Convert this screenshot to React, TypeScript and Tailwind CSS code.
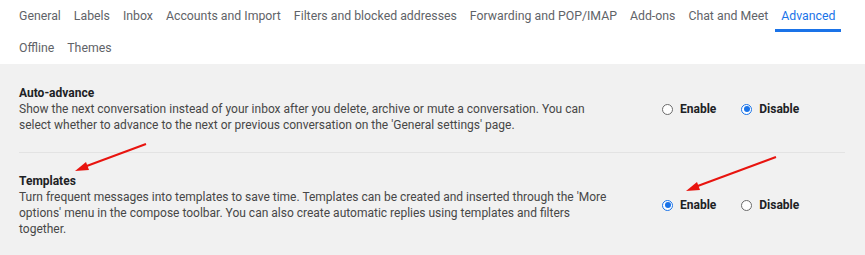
import React from "react";

const tabs = [
  "General",
  "Labels",
  "Inbox",
  "Accounts and Import",
  "Filters and blocked addresses",
  "Forwarding and POP/IMAP",
  "Add-ons",
  "Chat and Meet",
  "Advanced",
  "Offline",
  "Themes",
];

function Radio({ checked, label }: { checked: boolean; label: string }) {
  return (
    <label className="flex items-center gap-[7px]">
      <span
        className={
          checked
            ? "w-[11px] h-[11px] rounded-full border border-[#1a73e8] bg-white flex items-center justify-center"
            : "w-[11px] h-[11px] rounded-full border border-[#6b6b6b] bg-white"
        }
      >
        {checked && <span className="w-[6px] h-[6px] rounded-full bg-[#1a73e8]" />}
      </span>
      <span className="text-[12px] font-bold text-[#202124]">{label}</span>
    </label>
  );
}

function SettingRow({
  title,
  desc,
  enabled,
  border,
}: {
  title: string;
  desc: string;
  enabled: boolean;
  border?: boolean;
}) {
  return (
    <div className={border ? "flex items-center border-b border-[#e3e3e3] pt-[21px] pb-[19px]" : "flex items-center pt-[20px] pb-[18px]"}>
      <div className="w-[590px] shrink-0">
        <div className="text-[12px] leading-[16px] font-bold text-[#202124]">{title}</div>
        <div className="text-[12px] leading-[16px] text-[#474747]">{desc}</div>
      </div>
      <div className="ml-[53px] flex items-center gap-[25px]">
        <Radio checked={enabled} label="Enable" />
        <Radio checked={!enabled} label="Disable" />
      </div>
    </div>
  );
}

export default function App() {
  return (
    <div className="relative w-[865px] h-[255px] bg-white overflow-hidden" style={{ fontFamily: "Roboto, 'Open Sans', sans-serif" }}>
      {/* tab bar */}
      <div className="flex flex-wrap pl-[19px] gap-x-[13px] text-[12.3px] text-[#5f6368]">
        {tabs.map((t) => (
          <div
            key={t}
            className={
              t === "Advanced"
                ? "h-[32px] flex items-center px-[6px] -mx-[6px] border-b-[3px] border-[#1a73e8] pt-[3px] text-[#1a73e8]"
                : "h-[32px] flex items-center"
            }
          >
            {t}
          </div>
        ))}
      </div>

      {/* settings */}
      <div className="bg-[#f1f1f1] h-[191px] pl-[19px] pr-[20px]">
        <SettingRow
          title="Auto-advance"
          desc="Show the next conversation instead of your inbox after you delete, archive or mute a conversation. You can select whether to advance to the next or previous conversation on the 'General settings' page."
          enabled={false}
          border
        />
        <SettingRow
          title="Templates"
          desc="Turn frequent messages into templates to save time. Templates can be created and inserted through the 'More options' menu in the compose toolbar. You can also create automatic replies using templates and filters together."
          enabled
        />
      </div>

      {/* annotation arrows */}
      <svg className="absolute inset-0 pointer-events-none" width="865" height="255">
        <line x1="146" y1="144" x2="84" y2="167" stroke="#e8140f" strokeWidth="2" />
        <polygon points="75,171 86,162 89,170" fill="#e8140f" />
        <line x1="776" y1="157" x2="695" y2="187" stroke="#e8140f" strokeWidth="2" />
        <polygon points="686,191 697,182 700,190" fill="#e8140f" />
      </svg>
    </div>
  );
}
